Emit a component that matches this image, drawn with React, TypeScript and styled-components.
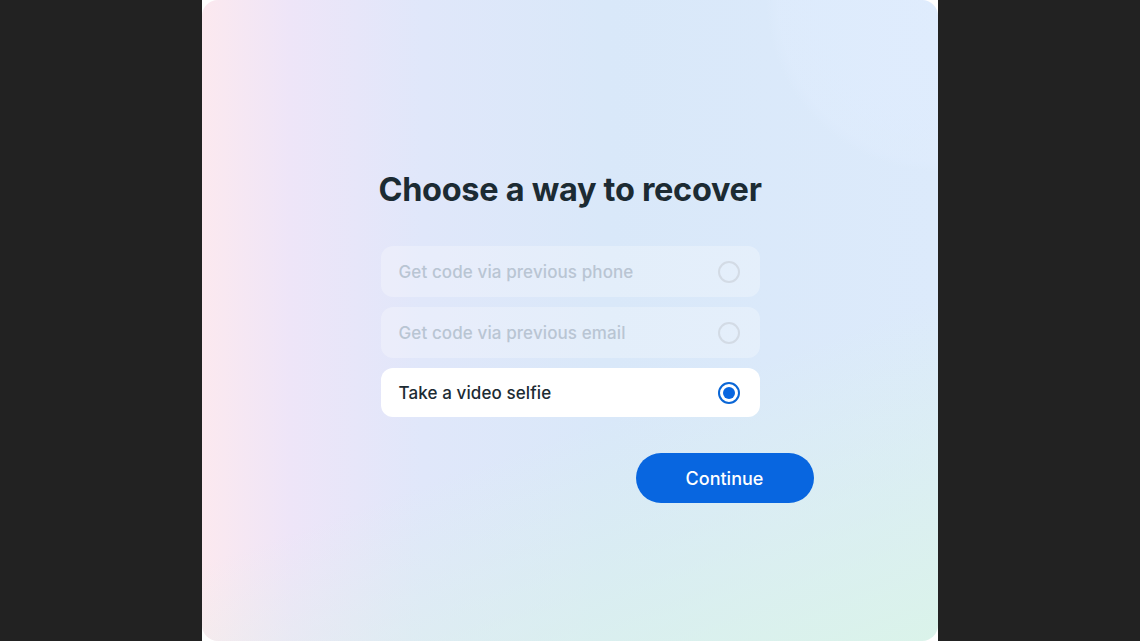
import { useState } from 'react'
import styled, { createGlobalStyle } from 'styled-components'

const GlobalStyle = createGlobalStyle`
  html, body {
    margin: 0;
    padding: 0;
    background: #222222;
  }
  * {
    box-sizing: border-box;
  }
`

const Page = styled.div`
  width: 100vw;
  height: 100vh;
  display: flex;
  justify-content: center;
  background: #222222;
  font-family: Inter, "Noto Sans", sans-serif;
`

const Frame = styled.div`
  width: 736px;
  height: 641px;
  background: #ffffff;
`

const Panel = styled.div`
  position: relative;
  height: 100%;
  border-radius: 16px;
  overflow: hidden;
  display: flex;
  flex-direction: column;
  align-items: center;
  padding-top: 170px;
  background:
    radial-gradient(circle at 100% 0%, rgba(226, 238, 255, 0.55) 0, rgba(226, 238, 255, 0.35) 160px, rgba(226, 238, 255, 0) 172px),
    linear-gradient(160deg, rgba(220, 236, 250, 0) 62%, rgba(218, 244, 232, 0.9) 100%),
    linear-gradient(90deg, #fce9ef 0%, #eee5f8 12%, #e0e7fa 30%, #d9e8f9 55%, #dceafb 100%);
`

const Title = styled.h1`
  margin: 0 0 36px;
  font-size: 32.5px;
  line-height: 40px;
  font-weight: 700;
  color: #1c2b33;
  letter-spacing: -0.3px;
`

const OptionList = styled.div`
  width: 379px;
  display: flex;
  flex-direction: column;
  gap: 10px;
`

const Option = styled.button<{ $selected: boolean }>`
  height: ${p => (p.$selected ? '49px' : '51px')};
  border: none;
  border-radius: 12px;
  padding: 0 20px 0 18px;
  display: flex;
  align-items: center;
  justify-content: space-between;
  cursor: pointer;
  font-family: inherit;
  font-size: 17px;
  font-weight: 500;
  letter-spacing: 0.1px;
  background: ${p => (p.$selected ? '#ffffff' : 'rgba(255, 255, 255, 0.28)')};
  color: ${p => (p.$selected ? '#1c2b33' : '#b9c5d3')};
`

const Radio = styled.span<{ $selected: boolean }>`
  width: 22px;
  height: 22px;
  border-radius: 50%;
  border: 2px solid ${p => (p.$selected ? '#0a66d6' : '#d3dbe5')};
  display: flex;
  align-items: center;
  justify-content: center;

  &::after {
    content: "";
    width: 12px;
    height: 12px;
    border-radius: 50%;
    background: #0866e0;
    display: ${p => (p.$selected ? 'block' : 'none')};
  }
`

const ButtonRow = styled.div`
  width: 487px;
  margin-top: 36px;
  display: flex;
  justify-content: flex-end;
`

const ContinueButton = styled.button`
  width: 178px;
  height: 50px;
  border: none;
  border-radius: 25px;
  background: #0866e0;
  color: #ffffff;
  font-family: inherit;
  font-size: 18px;
  font-weight: 500;
  cursor: pointer;
`

const options = [
  'Get code via previous phone',
  'Get code via previous email',
  'Take a video selfie',
]

function App() {
  const [selected] = useState(2)

  return (
    <Page>
      <GlobalStyle />
      <Frame>
        <Panel>
          <Title>Choose a way to recover</Title>
          <OptionList>
            {options.map((label, i) => (
              <Option key={label} $selected={i === selected}>
                {label}
                <Radio $selected={i === selected} />
              </Option>
            ))}
          </OptionList>
          <ButtonRow>
            <ContinueButton>Continue</ContinueButton>
          </ButtonRow>
        </Panel>
      </Frame>
    </Page>
  )
}

export default App
